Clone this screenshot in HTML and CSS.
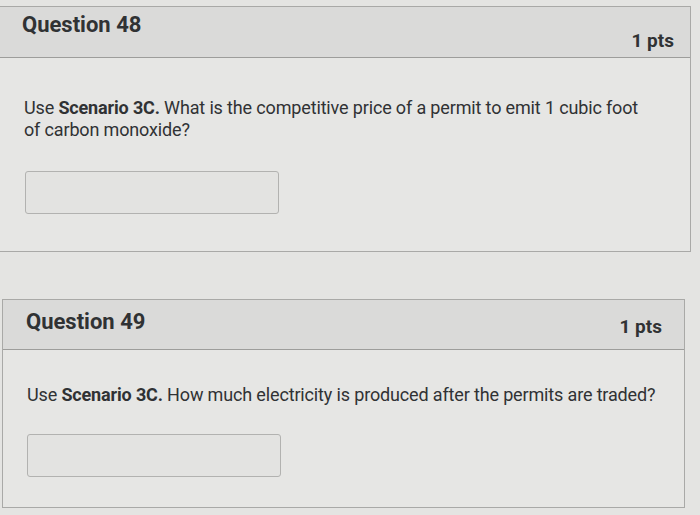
FILE: index.html
```html
<!DOCTYPE html>
<html>
<head>
<meta charset="utf-8">
<link rel="stylesheet" href="styles.css">
</head>
<body>
<div class="page">
  <div class="card card-a">
    <div class="head">
      <span class="title">Question 48</span>
      <span class="pts">1 pts</span>
    </div>
    <div class="body">
      <p class="q">Use <b>Scenario 3C.</b> What is the competitive price of a permit to emit 1 cubic foot of carbon monoxide?</p>
      <div class="answer"></div>
    </div>
  </div>
  <div class="card card-b">
    <div class="head">
      <span class="title">Question 49</span>
      <span class="pts">1 pts</span>
    </div>
    <div class="body">
      <p class="q">Use <b>Scenario 3C.</b> How much electricity is produced after the permits are traded?</p>
      <div class="answer"></div>
    </div>
  </div>
</div>
</body>
</html>
```
FILE: styles.css
```css
html, body {
  margin: 0;
  padding: 0;
}
body {
  width: 700px;
  height: 515px;
  overflow: hidden;
  background: #e4e4e2;
  font-family: Roboto, "Liberation Sans", sans-serif;
  color: #303234;
}
.page {
  display: flex;
  flex-direction: column;
  padding-top: 6px;
}
.card {
  border: 1px solid #a9a9a7;
  background: #e6e6e4;
  box-sizing: border-box;
}
.card-a {
  width: 691px;
  height: 246px;
  border-left: none;
}
.card-b {
  margin-top: 47px;
  margin-left: 2px;
  width: 683px;
  height: 209px;
}
.head {
  display: flex;
  justify-content: space-between;
  background: #dadad9;
  border-bottom: 1px solid #9d9d9b;
  box-sizing: border-box;
}
.card-a .head {
  height: 51px;
  padding: 5px 16px 0 22px;
}
.card-b .head {
  height: 50px;
  padding: 9px 22px 0 23px;
}
.title {
  font-size: 22px;
  font-weight: 700;
}
.pts {
  font-size: 19px;
  font-weight: 700;
  align-self: flex-start;
  margin-top: 17px;
}
.card-b .pts {
  margin-top: 6px;
}
.body {
  padding: 0 24px;
}
.card-a .body {
  padding-top: 39px;
}
.card-b .body {
  padding-top: 34px;
}
.q {
  margin: 0;
  max-width: 632px;
  font-size: 18px;
  line-height: 22px;
  letter-spacing: -0.15px;
}
.q b {
  font-weight: 700;
}
.answer {
  width: 254px;
  height: 43px;
  border: 1px solid #b2b2b0;
  border-radius: 3px;
  background: #e3e3e1;
  box-sizing: border-box;
}
.card-a .answer {
  margin-top: 30px;
  margin-left: 1px;
}
.card-b .answer {
  margin-top: 28px;
  margin-left: 0;
}
```
